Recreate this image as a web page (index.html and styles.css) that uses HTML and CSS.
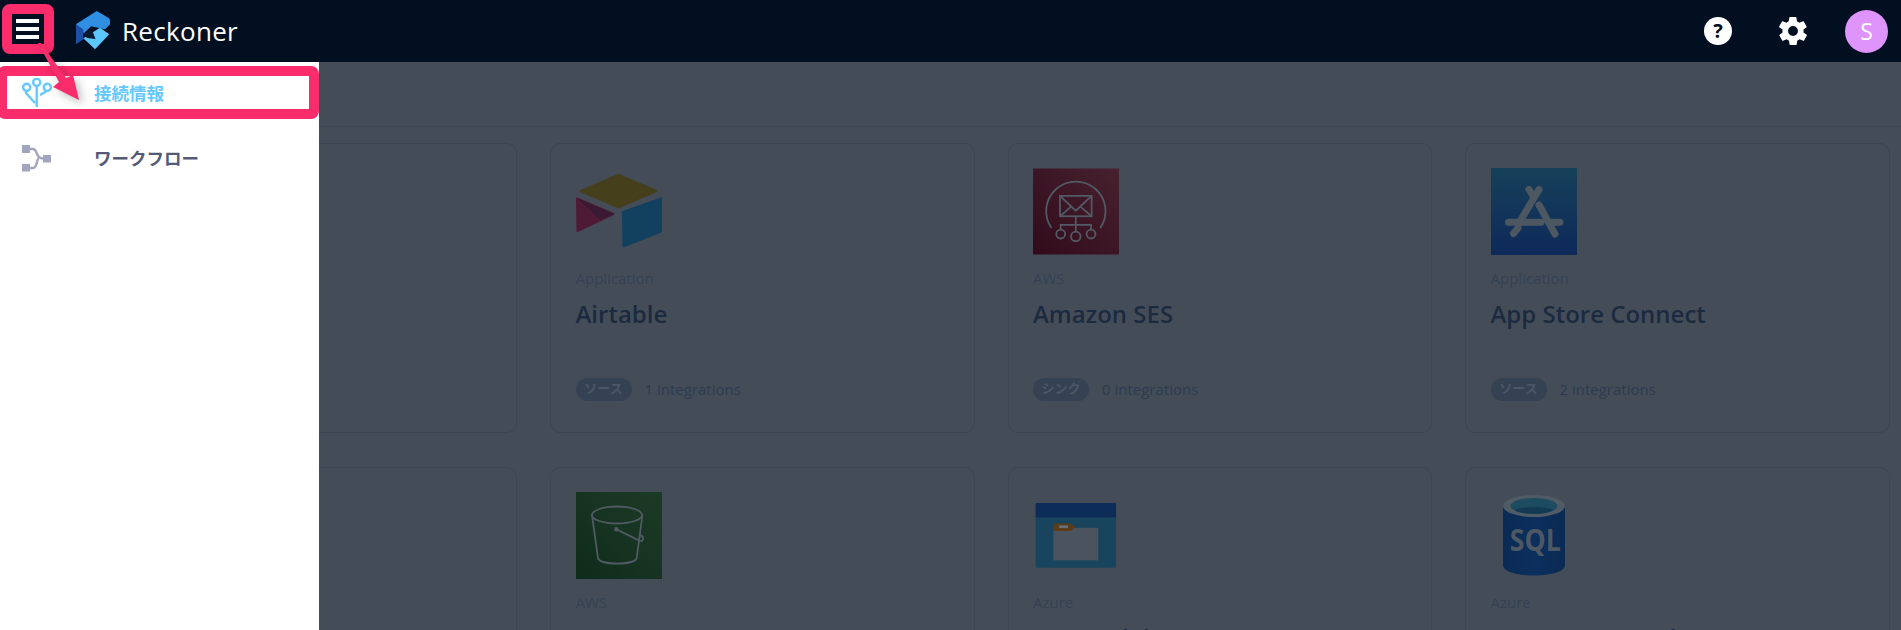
FILE: index.html
```html
<!DOCTYPE html>
<html lang="ja">
<head>
  <meta charset="UTF-8">
  <meta name="viewport" content="width=device-width, initial-scale=1.0">
  <title>Reckoner 接続情報</title>
  <link rel="stylesheet" href="styles.css">
</head>
<body>

  <header class="topbar">
    <div class="topbar-left">
      <button class="menu-btn" aria-label="menu">
        <span></span><span></span><span></span>
      </button>
      <svg class="logo" viewBox="0 0 36 40" width="36" height="40">
        <path d="M1 14.300L21.700 1l11.600 6.700c1.500 1 1.700 2 1.700 3.500v3.100l-5 5-14-3-7 7z" fill="#2f8fe3"/>
        <polygon points="1,14.300 8.300,19.300 8.300,29.300 1,34.300" fill="#1c4fa8"/>
        <polygon points="8.300,28.300 25,17.700 34.300,24.300 20,39.300" fill="#5cc6ff"/>
        <polygon points="8.300,24 17,20 20.500,29 12,28" fill="#0b1a30"/>
      </svg>
      <span class="brand">Reckoner</span>
    </div>
    <div class="topbar-right">
      <span class="help">?</span>
      <svg class="gear" viewBox="0 0 24 24" width="34" height="34">
        <path fill="#fff" fill-rule="evenodd" d="M19.4 13a7.6 7.6 0 0 0 0-2l2.1-1.6a.5.5 0 0 0 .1-.6l-2-3.5a.5.5 0 0 0-.6-.2l-2.5 1a7.300 7.300 0 0 0-1.700-1l-.4-2.600a.5.5 0 0 0-.5-.4h-4a.5.5 0 0 0-.5.4l-.4 2.600a7.700 7.700 0 0 0-1.700 1l-2.500-1a.5.5 0 0 0-.6.2l-2 3.500a.5.5 0 0 0 .1.6L4.600 11a7.600 7.600 0 0 0 0 2l-2.100 1.600a.5.5 0 0 0-.1.6l2 3.500c.1.200.4.300.6.200l2.500-1c.5.400 1.100.700 1.700 1l.4 2.600c0 .200.300.400.500.400h4c.200 0 .500-.200.500-.400l.4-2.600c.600-.300 1.200-.600 1.700-1l2.500 1c.200.100.500 0 .600-.200l2-3.500a.5.5 0 0 0-.1-.6L19.400 13zM12 15.500a3.500 3.500 0 1 1 0-7 3.500 3.500 0 0 1 0 7z"/>
      </svg>
      <span class="avatar">S</span>
    </div>
  </header>

  <main class="content">
    <div class="subbar"></div>
    <div class="card-grid">
      <div class="card"></div>

      <div class="card">
        <svg class="card-icon" viewBox="0 0 86 87">
          <polygon points="42.300,7 80.700,23 42.300,39.300 4.700,23" fill="#453f1c" stroke="#453f1c" stroke-width="2" stroke-linejoin="round"/>
          <polygon points="85,30.500 85,63.500 47.500,78.500 47,44" fill="#12405f" stroke="#12405f" stroke-width="2" stroke-linejoin="round"/>
          <polygon points="1,30.500 37.500,46 1.500,63" fill="#4f1a36" stroke="#4f1a36" stroke-width="2" stroke-linejoin="round"/>
          <polygon points="1,30 38,46 24,52" fill="#3a1a32"/>
        </svg>
        <div class="card-type">Application</div>
        <div class="card-title">Airtable</div>
        <div class="card-meta"><span class="badge">ソース</span>1 integrations</div>
      </div>

      <div class="card">
        <svg class="card-icon" viewBox="0 0 87 87">
          <defs>
            <linearGradient id="sesBg" x1="0" y1="1" x2="1" y2="0">
              <stop offset="0" stop-color="#320b1b"/>
              <stop offset="1" stop-color="#47212e"/>
            </linearGradient>
          </defs>
          <rect width="87" height="87" fill="url(#sesBg)"/>
          <g fill="none" stroke="#515a64" stroke-width="1.800">
            <path d="M18.700 60.300A30 30 0 1 1 68 60.300"/>
            <rect x="27.300" y="27.700" width="32" height="20.600"/>
            <path d="M27.300 27.700l16 15 16-15M27.300 48.300l11-9.500M59.300 48.300l-11-9.500"/>
            <path d="M43.300 48.300v15.500M28 61.500V57h30.700v4.500"/>
            <circle cx="28" cy="66.300" r="4.500"/>
            <circle cx="43.300" cy="68.700" r="4.800"/>
            <circle cx="58.700" cy="66.300" r="4.500"/>
          </g>
        </svg>
        <div class="card-type">AWS</div>
        <div class="card-title">Amazon SES</div>
        <div class="card-meta"><span class="badge">シンク</span>0 integrations</div>
      </div>

      <div class="card">
        <svg class="card-icon" viewBox="0 0 86 87">
          <defs>
            <linearGradient id="appBg" x1="0" y1="0" x2="0" y2="1">
              <stop offset="0" stop-color="#164059"/>
              <stop offset="1" stop-color="#0e295a"/>
            </linearGradient>
          </defs>
          <rect width="86" height="87" fill="url(#appBg)"/>
          <g fill="none" stroke="#4d5762" stroke-width="7" stroke-linecap="round">
            <path d="M48 21.500L28 55M27 60l-4.500 5.500"/>
            <path d="M38 21.500l5 8M48 37l16 29"/>
            <path d="M17.500 54.300H50M59 54.300h10"/>
          </g>
        </svg>
        <div class="card-type">Application</div>
        <div class="card-title">App Store Connect</div>
        <div class="card-meta"><span class="badge">ソース</span>2 integrations</div>
      </div>

      <div class="card"></div>

      <div class="card">
        <svg class="card-icon" viewBox="0 0 86 87">
          <defs>
            <linearGradient id="s3Bg" x1="0" y1="1" x2="1" y2="0">
              <stop offset="0" stop-color="#0f2c1b"/>
              <stop offset="1" stop-color="#1c3b26"/>
            </linearGradient>
          </defs>
          <rect width="86" height="87" fill="url(#s3Bg)"/>
          <g fill="none" stroke="#515a64" stroke-width="1.800">
            <ellipse cx="41" cy="23" rx="25" ry="8.500"/>
            <path d="M16 23l6 43.300c3 7 35.500 7 38.700 0L66.400 23"/>
            <path d="M40.300 37.300l23.500 11.500c5 1 4-6-1-5.500"/>
          </g>
          <circle cx="40.300" cy="37.300" r="2.200" fill="#515a64"/>
        </svg>
        <div class="card-type">AWS</div>
        <div class="card-title">Amazon S3</div>
      </div>

      <div class="card">
        <svg class="card-icon" viewBox="0 0 87 87">
          <rect x="2.700" y="10.700" width="81.300" height="65.300" rx="1.500" fill="#19445e"/>
          <path d="M2.700 25.300V12.200a1.500 1.500 0 0 1 1.500-1.500H82.500a1.500 1.500 0 0 1 1.500 1.500v13.100z" fill="#0d2c57"/>
          <rect x="20.600" y="35.700" width="45.400" height="33" fill="#4a535e"/>
          <polygon points="20.600,31.300 38,31.300 43,35 38,39 20.600,39" fill="#5b3c1a"/>
          <rect x="26.400" y="33.300" width="9" height="2.700" fill="#66707a"/>
        </svg>
        <div class="card-type">Azure</div>
        <div class="card-title">Azure Blob Storage</div>
      </div>

      <div class="card">
        <svg class="card-icon" viewBox="0 0 86 87">
          <defs>
            <linearGradient id="sqlBg" x1="0" y1="0" x2="1" y2="0">
              <stop offset="0" stop-color="#0a2a53"/>
              <stop offset="0.500" stop-color="#0c2f5e"/>
              <stop offset="1" stop-color="#0a2a53"/>
            </linearGradient>
          </defs>
          <path d="M12 14v59c0 14 62 14 62 0V14z" fill="url(#sqlBg)"/>
          <ellipse cx="43" cy="14" rx="31" ry="11" fill="#515b65"/>
          <ellipse cx="43" cy="14" rx="23.500" ry="8" fill="#1d4b60"/>
          <path d="M24 18c5-4 32-4 38 0-6 5-32 5-38 0z" fill="#143a53"/>
          <text class="sql-text" x="18.800" y="59" textLength="51" lengthAdjust="spacingAndGlyphs">SQL</text>
        </svg>
        <div class="card-type">Azure</div>
        <div class="card-title">Azure SQL Database</div>
      </div>
    </div>
  </main>

  <nav class="drawer">
    <a class="drawer-item active">
      <svg class="drawer-icon" viewBox="0 0 30 30" width="30" height="30">
        <g fill="none" stroke="#66c8ff" stroke-width="2.400">
          <circle cx="4.700" cy="9.300" r="3.600"/>
          <circle cx="14.700" cy="4.300" r="3.600"/>
          <circle cx="25.300" cy="9.300" r="3.600"/>
          <path d="M14.700 8v21M4 13v2l9 10M25 13l-7 4"/>
        </g>
      </svg>
      <span>接続情報</span>
    </a>
    <a class="drawer-item">
      <svg class="drawer-icon" viewBox="0 0 30 30" width="30" height="30">
        <rect x="0" y="2" width="8" height="8" fill="#a1a5bd"/>
        <rect x="21" y="12" width="8" height="7.500" fill="#a1a5bd"/>
        <rect x="0" y="21" width="8" height="7.500" fill="#a1a5bd"/>
        <path d="M8 6h3c5 0 2 9.500 10 9.500M8 25h3c5 0 3-9.500 6-9.500" fill="none" stroke="#a1a5bd" stroke-width="2.400"/>
      </svg>
      <span>ワークフロー</span>
    </a>
  </nav>

  <!-- callouts drawn over the screenshot -->
  <div class="mark mark-menu"></div>
  <div class="mark mark-item"></div>
  <svg class="mark-arrow" viewBox="0 0 90 110" width="90" height="110">
    <polygon points="38,43 41,43 66,78 73,75 79,100 53,87 59,82" fill="#fb2c6b"/>
  </svg>

</body>
</html>
```

FILE: styles.css
```css
/* Page */
html, body {
  margin: 0;
  height: 100%;
  overflow: hidden;
}
body {
  font-family: 'Open Sans', 'Noto Sans CJK JP', sans-serif;
  background: #444d57;
  display: flex;
  flex-direction: column;
}

/* Top bar */
.topbar {
  height: 62px;
  flex: none;
  background: #020f20;
  display: flex;
  justify-content: space-between;
  align-items: center;
  padding-right: 13px;
}
.topbar-left {
  display: flex;
  align-items: center;
}
.menu-btn {
  width: 33px;
  height: 28px;
  margin: 0 31px 4px 11px;
  padding: 4px 5px;
  border: none;
  background: none;
  display: flex;
  flex-direction: column;
  justify-content: space-between;
}
.menu-btn span {
  display: block;
  height: 4px;
  background: #fff;
}
.logo {
  margin: 0 11px 3px 0;
}
.brand {
  color: #fff;
  font-size: 26px;
  letter-spacing: 0.3px;
}
.topbar-right {
  display: flex;
  align-items: center;
}
.help {
  width: 28px;
  height: 28px;
  border-radius: 50%;
  background: #fff;
  color: #020f20;
  font-size: 20px;
  font-weight: 700;
  line-height: 28px;
  text-align: center;
  margin-right: 44px;
}
.gear {
  margin-right: 35px;
}
.avatar {
  width: 43px;
  height: 43px;
  border-radius: 50%;
  background: #df94fb;
  color: #fff;
  font-size: 23px;
  line-height: 43px;
  text-align: center;
}

/* Dimmed content */
.subbar {
  height: 64px;
  border-bottom: 1px solid #3a4653;
}
.card-grid {
  display: grid;
  grid-template-columns: repeat(4, 1fr);
  grid-auto-rows: 290px;
  gap: 34px 33px;
  padding: 16px 11.500px 0 92.500px;
}
.card {
  box-sizing: border-box;
  border: 1px solid #3a4653;
  border-radius: 10px;
  padding: 24px 24.500px;
}
.card-icon {
  display: block;
  width: 86px;
  height: 87px;
}
.card-type {
  margin-top: 13px;
  font-size: 15px;
  line-height: 20px;
  color: #344155;
}
.card-title {
  margin-top: 11px;
  font-size: 24px;
  font-weight: 600;
  line-height: 30px;
  color: #1c2a40;
}
.card-meta {
  margin-top: 49px;
  display: flex;
  align-items: center;
  gap: 13px;
  font-size: 15px;
  line-height: 23px;
  color: #2d3b50;
}
.badge {
  width: 56px;
  height: 23px;
  border-radius: 12px;
  background: #344254;
  color: #4a5766;
  font-size: 13px;
  font-weight: 700;
  line-height: 21px;
  text-align: center;
}
.sql-text {
  font-family: 'Open Sans', sans-serif;
  font-size: 30px;
  font-weight: 700;
  fill: #4e5864;
}

/* Side drawer */
.drawer {
  position: absolute;
  top: 62px;
  left: 0;
  bottom: 0;
  width: 319px;
  background: #fff;
  display: flex;
  flex-direction: column;
  gap: 3px;
}
.drawer-item {
  height: 62px;
  display: flex;
  align-items: center;
  font-size: 17.500px;
  font-weight: 700;
  color: #545a78;
}
.drawer-item span {
  margin-bottom: 2px;
}
.drawer-item.active {
  color: #66c8ff;
}
.drawer-icon {
  margin: 0 42px 0 22px;
}

/* Callouts */
.mark {
  position: absolute;
  box-sizing: border-box;
  border: 10px solid #fb2c6b;
  border-radius: 8px;
}
.mark-menu {
  left: 2px;
  top: 4px;
  width: 52px;
  height: 50px;
}
.mark-item {
  left: -3px;
  top: 66px;
  width: 322px;
  height: 53px;
}
.mark-arrow {
  position: absolute;
  left: 0;
  top: 0;
  filter: drop-shadow(4px 4px 4px rgba(0, 0, 0, 0.25));
}
```
